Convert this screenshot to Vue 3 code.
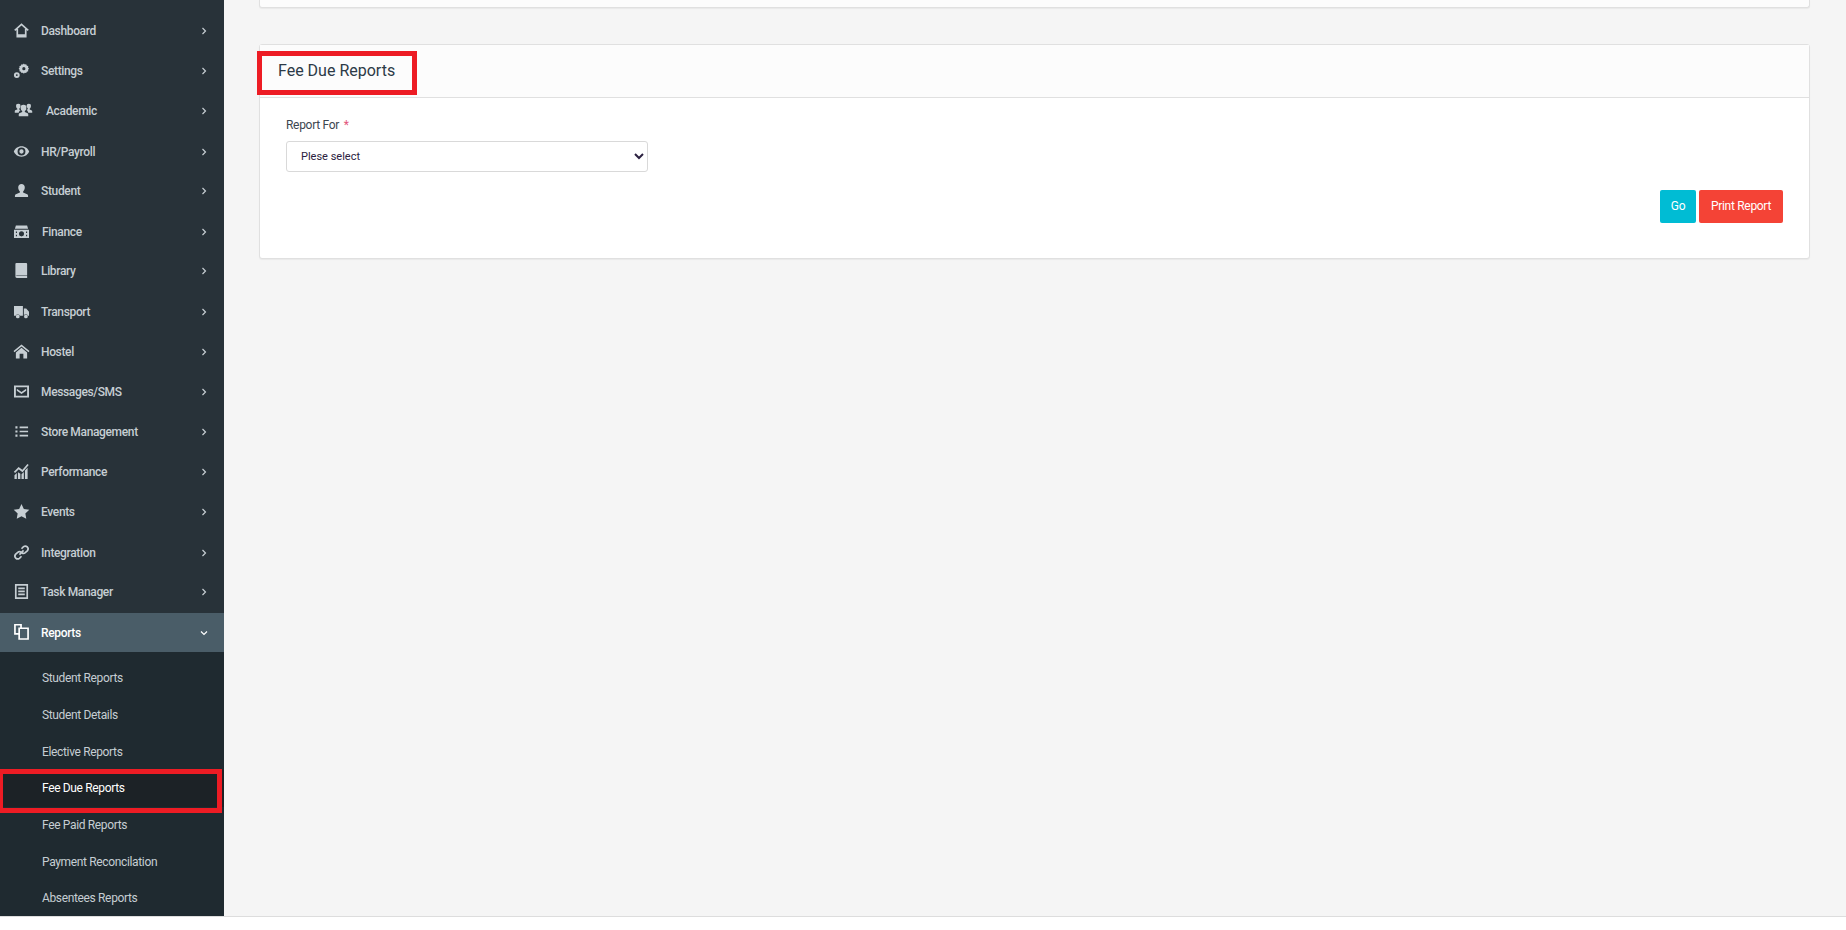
<script setup>
const S = 's', F = 'f'
const menu = [
  { label: 'Dashboard', paths: [[S, 'M1.800 8.800 L9 2.500 L16.200 8.800 M4.500 7.500 V15.500 H13.500 V7.500 M4.500 13.800 H13.500']] },
  { label: 'Settings', paths: [[F, 'M11.500 1.500l1 1.200 1.500-.3.7 1.400 1.500.5-.2 1.500 1 1.200-1 1.200.2 1.500-1.500.5-.7 1.400-1.500-.3-1 1.200-1-1.200-1.500.3-.7-1.400-1.500-.5.2-1.500-1-1.200 1-1.200-.2-1.500 1.500-.5.7-1.400 1.500.3zm0 3.800a1.700 1.700 0 1 0 0 3.400 1.700 1.700 0 0 0 0-3.400z'], [F, 'M4 10.800a3.100 3.100 0 1 0 0 6.200 3.100 3.100 0 0 0 0-6.200zm0 2.100a1 1 0 1 1 0 2 1 1 0 0 1 0-2z']] },
  { label: 'Academic', wide: true, vb: '0 2 20 14', cls: 'shift5', paths: [[F, 'M4.500 2.500a2.300 2.300 0 0 1 2.300 2.600c0 1.200-.6 2.200-1.300 2.700v.8l1.500.6C6 9.500 5.200 10.500 5 12H.8v-1.600c0-.6.300-1 .9-1.300l1.800-.7v-.8C2.800 7.300 2.200 6.300 2.200 5.100A2.300 2.300 0 0 1 4.500 2.500zM15.500 2.500a2.300 2.300 0 0 1 2.300 2.600c0 1.200-.6 2.200-1.300 2.700v.8l1.800.7c.6.300.9.700.9 1.300V12H15c-.2-1.500-1-2.500-2-3.300l1.500-.6v-.8c-.7-.5-1.300-1.500-1.300-2.700A2.300 2.300 0 0 1 15.500 2.500z'], [F, 'M10 3.500a3 3 0 0 1 3 3.300c0 1.500-.7 2.700-1.600 3.300v1l2.400 1c.7.300 1.200.8 1.200 1.600v1.800H5v-1.800c0-.8.500-1.300 1.200-1.600l2.400-1v-1C7.700 9.500 7 8.300 7 6.800A3 3 0 0 1 10 3.500z']] },
  { label: 'HR/Payroll', nudge: true, paths: [[F, 'M9 3.500C5 3.500 2 6 .8 9 2 12 5 14.500 9 14.500S16 12 17.200 9C16 6 13 3.500 9 3.500zm0 1.300A4.200 4.200 0 1 1 9 13.200 4.200 4.200 0 0 1 9 4.800zm0 1.900a2.300 2.300 0 1 0 0 4.600 2.300 2.300 0 0 0 0-4.600z']] },
  { label: 'Student', paths: [[F, 'M9 2a3.500 3.500 0 0 1 3.500 3.800c0 1.700-.8 3.400-1.800 4.200v1.200L15 13c.6.300 1 .8 1 1.500V16H2v-1.500c0-.7.4-1.200 1-1.500l4.300-1.800V10c-1-.8-1.800-2.500-1.800-4.200A3.500 3.500 0 0 1 9 2z']] },
  { label: 'Finance', nudge: true, cls: 'shift1', paths: [[F, 'M3 2.500h12l1 3.500H2z'], [F, 'M1 7h16v9H1zM3 9v1.500h1.200V9zm0 3.500V14h1.200v-1.500zm10.800-3.500v1.500H15V9zm0 3.500V14H15v-1.500zM9 8.800a2.700 2.700 0 1 0 0 5.400 2.700 2.700 0 0 0 0-5.400z']] },
  { label: 'Library', paths: [[F, 'M3.500 1h10.500a1 1 0 0 1 1 1v11.800H4.500A2 2 0 0 0 2.500 15V2a1 1 0 0 1 1-1zM2.500 15.200c0-.6.6-1 1.400-1H15V17H4c-.9 0-1.500-.8-1.500-1.800z']] },
  { label: 'Transport', step: true, paths: [[F, 'M1 3h9.500v10.500H7.200a2.300 2.300 0 0 0-4.400 0H1zM11.500 5.800H14l3 3.500v4.200h-1.200a2.300 2.300 0 0 0-4.300 0z'], [F, 'M5 12.200a2 2 0 1 1 0 4 2 2 0 0 1 0-4zM13.700 12.200a2 2 0 1 1 0 4 2 2 0 0 1 0-4z']] },
  { label: 'Hostel', paths: [[F, 'M9 1.500 L17.500 8.500 L16.500 9.800 L9 3.700 L1.500 9.800 L.5 8.500 Z'], [F, 'M9 5 L15 10 V16.500 H11 V11.500 H7 V16.500 H3 V10 Z']] },
  { label: 'Messages/SMS', paths: [[F, 'M1 2.500h16v13H1zM3 4.500v9h12v-9zm1 1.500L9 9.500 14 6v2.200L9 11.700 4 8.200z']] },
  { label: 'Store Management', paths: [[F, 'M2.500 3.500h2.200v2.200H2.500zM7 3.700h9v1.800H7zM2.500 7.900h2.200v2.200H2.500zM7 8.100h9v1.800H7zM2.500 12.300h2.200v2.200H2.500zM7 12.500h9v1.800H7z']] },
  { label: 'Performance', paths: [[F, 'M1.500 17v-4l2.500-2.500V17zM5.200 17V9.800L7.800 11.500V17zM9 17v-5L11.500 9.500V17zM12.700 17V8L15.500 5V17z'], [S, 'M1.500 10 L6 5.500 L10 8.500 L16 1.500']] },
  { label: 'Events', paths: [[F, 'M9 1l2.500 5.200 5.800.8-4.200 4 1 5.800L9 14.100l-5.100 2.700 1-5.800-4.200-4 5.800-.8z']] },
  { label: 'Integration', nudge: true, paths: [[S, 'M6.800 11.200l4.400-4.400M9 5l2.200-2.200a3 3 0 0 1 4.200 4.200L13 9.200a3 3 0 0 1-3.500.3M9 13l-2.200 2.200a3 3 0 0 1-4.200-4.200L5 8.800a3 3 0 0 1 3.500-.3']] },
  { label: 'Task Manager', paths: [[F, 'M2 1h14v16H2zM3.800 2.800v12.400h10.400V2.800zM5.500 4.800h7v1.800h-7zM5.500 8h7v1.800h-7zM5.500 11.200h7V13h-7z']] },
]
const reportIcon = [[S, 'M6.500 11.500H2V1.800H8.500V5.500M6.500 5.500H16V17H6.500z']]
const subs = ['Student Reports', 'Student Details', 'Elective Reports', 'Fee Due Reports', 'Fee Paid Reports', 'Payment Reconcilation', 'Absentees Reports']
</script>

<template>
  <div class="page">
    <div class="top">
      <aside class="sidebar">
        <div v-for="m in menu" :key="m.label" class="row" :class="{ nudge: m.nudge, step: m.step }">
          <span class="icon-slot">
            <svg :class="{ wide: m.wide }" :viewBox="m.vb || '1 1 16 16'">
              <path v-for="(p, i) in m.paths" :key="i" :d="p[1]" :class="p[0]" />
            </svg>
          </span>
          <span class="lbl" :class="m.cls">{{ m.label }}</span>
          <svg class="chev" viewBox="0 0 6 8"><path d="M1.500 1 L4.500 4 L1.500 7" /></svg>
        </div>
        <div class="row active">
          <span class="icon-slot">
            <svg viewBox="1 1 16 16">
              <path v-for="(p, i) in reportIcon" :key="i" :d="p[1]" :class="p[0]" />
            </svg>
          </span>
          <span class="lbl">Reports</span>
          <svg class="chev down" viewBox="0 0 8 6"><path d="M1 1.500 L4 4.500 L7 1.500" /></svg>
        </div>
        <ul class="subs">
          <li v-for="s in subs" :key="s" :class="{ sel: s === 'Fee Due Reports' }">
            {{ s }}
            <span v-if="s === 'Fee Due Reports'" class="mark side"></span>
          </li>
        </ul>
      </aside>
      <main class="main">
        <div class="stub"></div>
        <section class="card">
          <header class="card-head">
            <h4>Fee Due Reports</h4>
            <span class="mark head"></span>
          </header>
          <div class="card-body">
            <label class="fld-label" for="rf">Report For <em>*</em></label>
            <select id="rf" class="sel-box">
              <option>Plese select</option>
            </select>
            <div class="actions">
              <button class="btn go">Go</button>
              <button class="btn print">Print Report</button>
            </div>
          </div>
        </section>
      </main>
    </div>
    <footer class="foot"></footer>
  </div>
</template>

<style>
html, body { margin: 0; background: #fff; overflow: hidden; }
</style>

<style scoped>
.page { height: 930px; display: flex; flex-direction: column; font-family: Roboto, "Liberation Sans", sans-serif; }
.top { height: 916px; display: flex; background: #f5f5f5; overflow: hidden; }
.foot { flex: 1; background: #fff; border-top: 1px solid #ddd; }

.sidebar { width: 224px; flex: none; background: #283239; padding-top: 11px; box-sizing: border-box; overflow: hidden; }
.row { display: flex; align-items: center; height: 40px; padding-left: 15px; color: #c6ced3; font-size: 12px; letter-spacing: -0.35px; font-weight: 500; box-sizing: border-box; }
.nudge { margin-top: 1px; margin-bottom: -1px; }
.step { margin-top: 1px; }
.icon-slot { width: 26px; flex: none; display: flex; }
.icon-slot svg { width: 15px; height: 15px; overflow: visible; transform: translate(-1px, -1px); }
.icon-slot svg.wide { width: 19px; height: 14px; }
.f { fill: #c6ced3; }
.s { fill: none; stroke: #c6ced3; stroke-width: 1.800; }
.lbl { flex: 1; }
.shift5 { padding-left: 5px; }
.shift1 { padding-left: 1px; }
.chev { width: 6px; height: 8px; margin-right: 17px; flex: none; }
.chev path { fill: none; stroke: #c6ced3; stroke-width: 1.200; }
.chev.down { width: 8px; height: 6px; margin-right: 16px; }
.active { height: 39px; background: #4a5d68; color: #fff; margin-top: 1px; }
.active .f { fill: #fff; }
.active .s { stroke: #fff; }
.active .chev path { stroke: #fff; }

.subs { list-style: none; margin: 0; padding: 8.300px 0 0; background: #1f2a30; height: 264px; box-sizing: border-box; }
.subs li { height: 36.700px; line-height: 36.700px; padding-left: 42px; font-size: 12px; letter-spacing: -0.35px; color: #c6ced3; position: relative; }
.subs li.sel { color: #fff; background: #1c2226; }

.mark { position: absolute; border: 5px solid #ed1c24; box-sizing: border-box; pointer-events: none; }
.mark.side { left: -2px; top: -1px; width: 224px; height: 44px; }
.mark.head { left: -3px; top: 6px; width: 160px; height: 44px; }

.main { flex: 1; padding: 0 36px 0 35px; min-width: 0; }
.stub { height: 8px; box-sizing: border-box; background: #fcfcfc; border: 1px solid #e0e0e0; border-top: 0; border-radius: 0 0 3px 3px; box-shadow: 0 1px 1px rgba(0,0,0,.05); }
.card { margin-top: 36px; background: #fff; border: 1px solid #e0e0e0; border-radius: 3px; box-shadow: 0 1px 1px rgba(0,0,0,.05); height: 215px; box-sizing: border-box; }
.card-head { position: relative; height: 53px; background: #fcfcfc; border-bottom: 1px solid #e0e0e0; box-sizing: border-box; padding: 0 0 2px 18px; display: flex; align-items: center; }
.card-head h4 { margin: 0; font-size: 16px; font-weight: 400; color: #2c3a47; }
.card-body { padding: 20px 26px 0; }
.fld-label { display: block; font-size: 12px; letter-spacing: -0.3px; color: #3c4650; line-height: 15px; margin-bottom: 8px; }
.fld-label em { font-style: normal; color: #e2557a; margin-left: 2px; }
.sel-box { display: block; width: 362px; height: 31px; background: #fff; border: 1px solid #d9d9d9; border-radius: 3px; font: 400 11px Roboto, sans-serif; color: #2b2140; padding: 0 0 1px 10px; }
.actions { display: flex; justify-content: flex-end; gap: 3px; margin-top: 18px; }
.btn { height: 33px; border: 0; border-radius: 2px; color: #fff; font: 400 12px Roboto, sans-serif; letter-spacing: -0.3px; padding: 0 0 2px; }
.go { width: 36px; background: #00bcd4; }
.print { width: 84px; background: #f44336; }
</style>
